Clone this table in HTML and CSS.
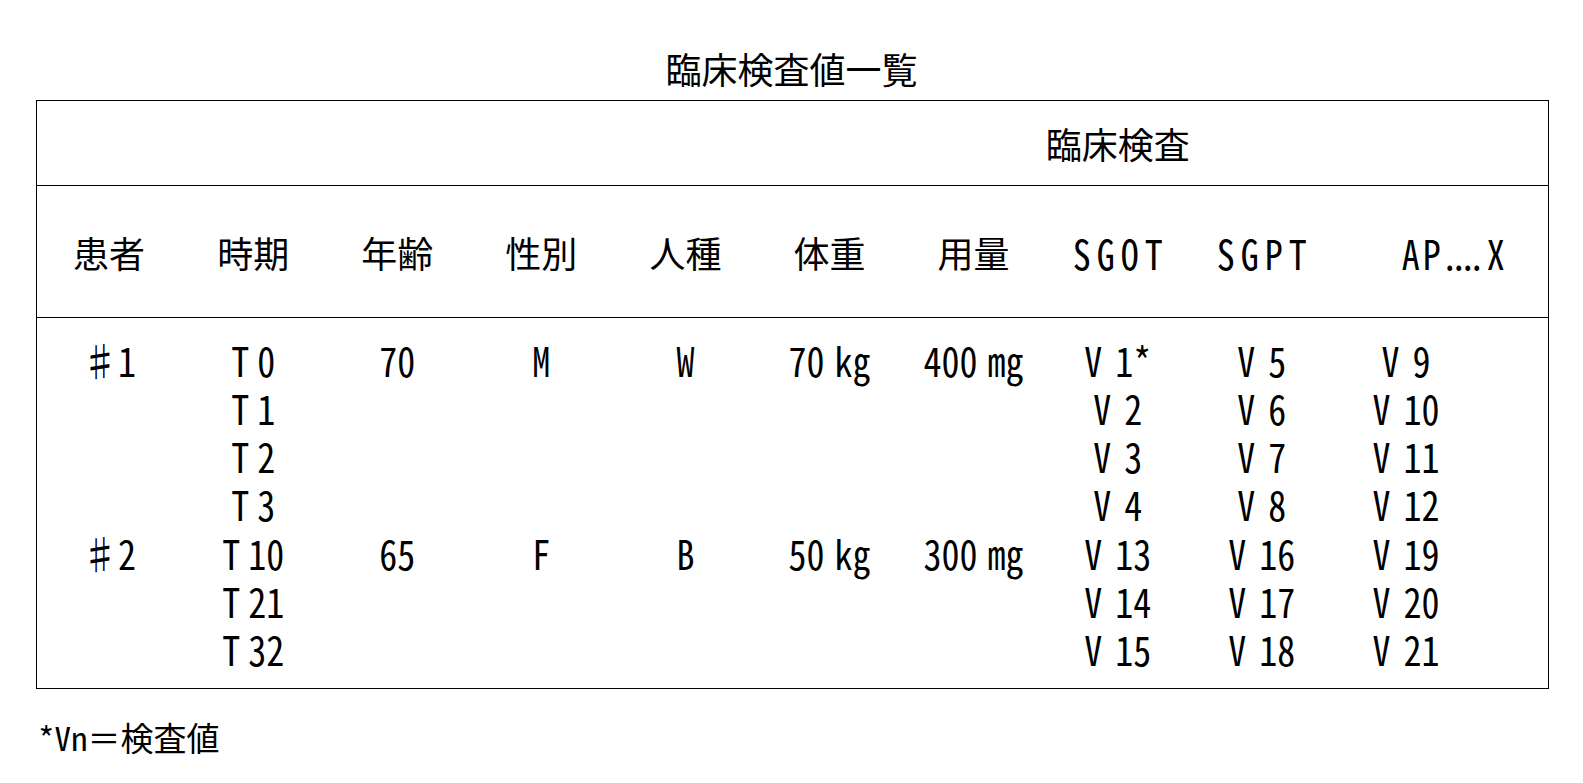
FILE: index.html
```html
<!DOCTYPE html>
<html lang="ja">
<head>
<meta charset="utf-8">
<title>臨床検査値一覧</title>
<link rel="stylesheet" href="styles.css">
</head>
<body>
<h1 class="title">臨床検査値一覧</h1>
<div class="sheet">
  <div class="grid band-top">
    <div class="span-lab">臨床検査</div>
  </div>
  <div class="grid band-head">
    <div class="cell">患者</div>
    <div class="cell">時期</div>
    <div class="cell">年齢</div>
    <div class="cell">性別</div>
    <div class="cell">人種</div>
    <div class="cell">体重</div>
    <div class="cell">用量</div>
    <div class="cell lat spaced">SGOT</div>
    <div class="cell lat spaced">SGPT</div>
    <div class="cell lat apx"><span class="a">A</span>P<span class="dots">....</span>X</div>
  </div>
  <div class="body">
    <div class="grid patient">
      <div class="cell"><div class="ln">♯1</div></div>
      <div class="cell tcol"><div class="ln">T 0</div><div class="ln">T 1</div><div class="ln">T 2</div><div class="ln">T 3</div></div>
      <div class="cell"><div class="ln">70</div></div>
      <div class="cell"><div class="ln">M</div></div>
      <div class="cell"><div class="ln">W</div></div>
      <div class="cell unit"><div class="ln">70 kg</div></div>
      <div class="cell unit"><div class="ln">400 mg</div></div>
      <div class="cell vcol"><div class="ln">V 1*</div><div class="ln">V 2</div><div class="ln">V 3</div><div class="ln">V 4</div></div>
      <div class="cell vcol"><div class="ln">V 5</div><div class="ln">V 6</div><div class="ln">V 7</div><div class="ln">V 8</div></div>
      <div class="cell vcol"><div class="ln">V 9</div><div class="ln">V 10</div><div class="ln">V 11</div><div class="ln">V 12</div></div>
    </div>
    <div class="grid patient">
      <div class="cell"><div class="ln">♯2</div></div>
      <div class="cell tcol"><div class="ln">T 10</div><div class="ln">T 21</div><div class="ln">T 32</div></div>
      <div class="cell"><div class="ln">65</div></div>
      <div class="cell"><div class="ln">F</div></div>
      <div class="cell"><div class="ln">B</div></div>
      <div class="cell unit"><div class="ln">50 kg</div></div>
      <div class="cell unit"><div class="ln">300 mg</div></div>
      <div class="cell vcol"><div class="ln">V 13</div><div class="ln">V 14</div><div class="ln">V 15</div></div>
      <div class="cell vcol"><div class="ln">V 16</div><div class="ln">V 17</div><div class="ln">V 18</div></div>
      <div class="cell vcol"><div class="ln">V 19</div><div class="ln">V 20</div><div class="ln">V 21</div></div>
    </div>
  </div>
</div>
<p class="note">*Vn＝検査値</p>
</body>
</html>
```
FILE: styles.css
```css
html, body {
  margin: 0;
  padding: 0;
  background: #fff;
}
body {
  font-family: "Noto Sans Mono CJK JP", "Noto Sans CJK JP", monospace;
  font-size: 36px;
  color: #000;
  padding-top: 50px;
}
.title {
  margin: 0 0 14px 0;
  font-size: 36px;
  font-weight: normal;
  line-height: 36px;
  text-align: center;
}
.sheet {
  margin-left: 36px;
  width: 1513px;
  border: 1.5px solid #000;
  box-sizing: border-box;
}
.grid {
  display: grid;
  grid-template-columns: repeat(10, 144.1px) 1fr;
}
.band-top {
  height: 84px;
  align-items: center;
  border-bottom: 1.5px solid #000;
}
.span-lab {
  grid-column: 8;
  text-align: center;
  white-space: nowrap;
  line-height: 36px;
}
.band-head {
  height: 131px;
  align-items: center;
  border-bottom: 1.5px solid #000;
}
.cell {
  text-align: center;
  white-space: nowrap;
  line-height: 36px;
}
.lat {
  transform: scaleY(1.12);
}
.spaced {
  letter-spacing: 6px;
  padding-left: 6px;
}
.apx {
  padding-left: 68px;
}
.apx .a {
  letter-spacing: 3px;
}
.apx .dots {
  letter-spacing: -9px;
  margin-right: 10px;
}
.body {
  padding: 16.5px 0 16px 0;
}
.ln {
  white-space: pre;
  line-height: 48.25px;
  transform: scaleY(1.12);
}
.tcol {
  word-spacing: -10px;
}
.vcol {
  word-spacing: -5px;
}
.unit {
  word-spacing: -8px;
}
.note {
  margin: 30px 0 0 38px;
  font-size: 33px;
  line-height: 36px;
}
```
